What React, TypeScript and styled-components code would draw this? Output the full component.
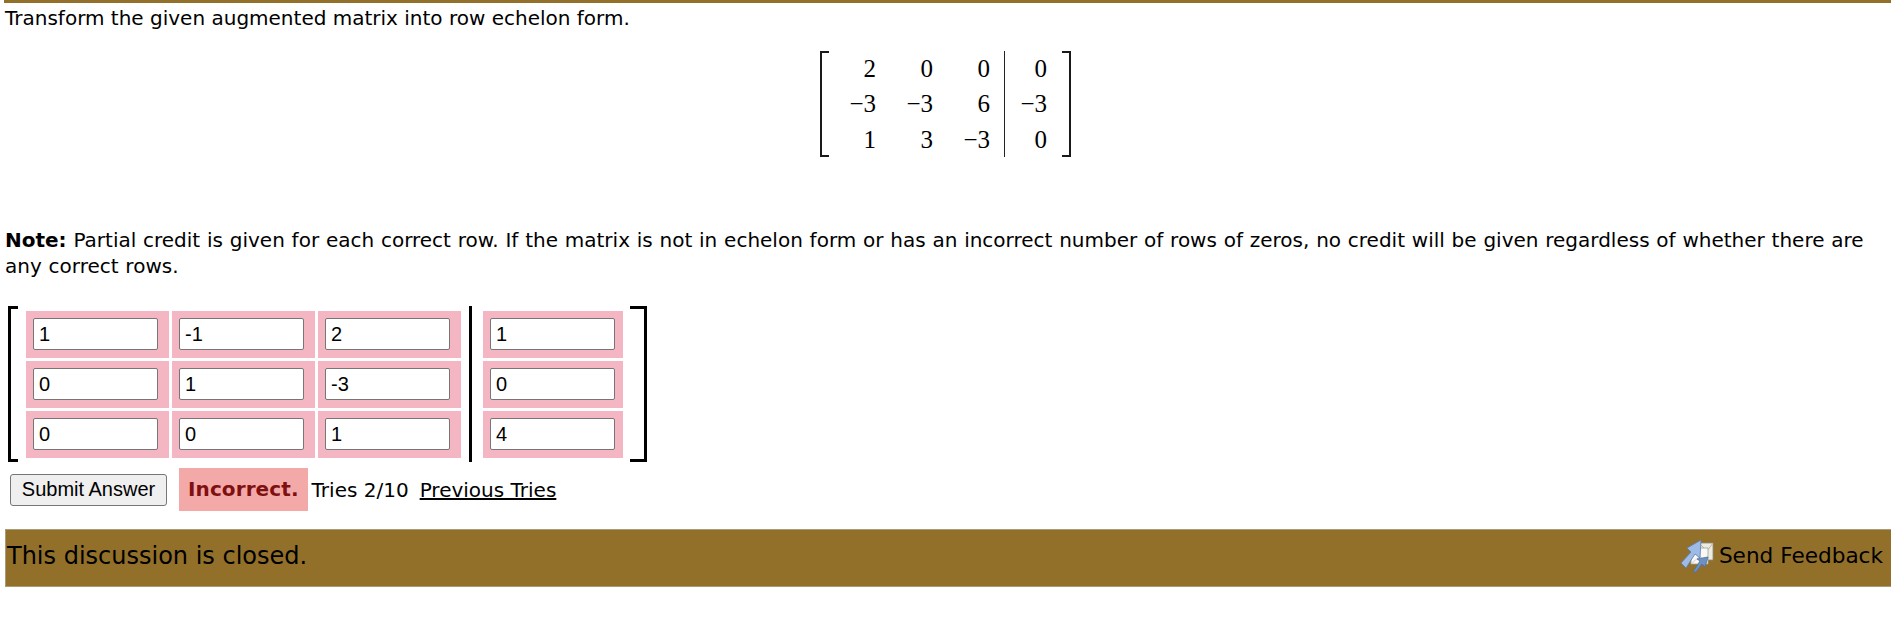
import React from 'react';
import styled, { createGlobalStyle } from 'styled-components';

const GlobalStyle = createGlobalStyle`
	html, body {
		margin: 0;
		padding: 0;
		background: #ffffff;
	}
	body {
		font-family: 'DejaVu Sans', Verdana, sans-serif;
		font-size: 20px;
		line-height: 26px;
		color: #000000;
	}
`;

const problemRows = [
	['2', '0', '0', '0'],
	['\u22123', '\u22123', '6', '\u22123'],
	['1', '3', '\u22123', '0'],
];

const answerRows = [
	['1', '-1', '2', '1'],
	['0', '1', '-3', '0'],
	['0', '0', '1', '4'],
];

const FeedbackIcon = () => (
	<svg width="34" height="34" viewBox="0 0 34 34">
		<path d="M19 4 L33 4 L33 21 L19 21 Z" fill="#ecebe4" stroke="#8f8a78" strokeWidth="0.8" />
		<path d="M19 4 L27 12 L33 4" fill="none" stroke="#b9b6a8" strokeWidth="1" />
		<path d="M11 9 L28 9 L28 25 L11 25 Z" fill="#f8f8f4" stroke="#a5a296" strokeWidth="0.8" />
		<path d="M11 25 L20 17 L28 25" fill="none" stroke="#c9c7bb" strokeWidth="0.8" />
		<path d="M13 33 L20 22 L17 20 L28 18 L25 28 L22 25 L16 33 Z" fill="#6f90c2" stroke="#4d6f9f" strokeWidth="0.8" />
		<path d="M1 24 L11 13 L7 9 L21 1 L20 19 L15 15 L6 29 Z" fill="#9dbbe6" stroke="#5a7cae" strokeWidth="0.8" />
	</svg>
);

const App: React.FC = () => {
	return (
		<Page>
			<GlobalStyle />
			<TopRule />
			<Prompt>Transform the given augmented matrix into row echelon form.</Prompt>
			<ProblemBlock>
				<ProblemBracket $side="left" />
				<ProblemGrid>
					{problemRows.map((row, i) =>
						row.map((value, j) => (
							<ProblemCell key={`${i}-${j}`} $split={j === 2}>
								{value}
							</ProblemCell>
						))
					)}
				</ProblemGrid>
				<ProblemBracket $side="right" />
			</ProblemBlock>
			<Note>
				<b>Note:</b> Partial credit is given for each correct row. If the matrix is not in echelon form or has an
				incorrect number of rows of zeros, no credit will be given regardless of whether there are any correct rows.
			</Note>
			<AnswerBlock>
				<AnswerBracket $side="left" />
				<AnswerGrid>
					{answerRows.map((row) =>
						row.slice(0, 3).map((value, j) => (
							<Cell key={j}>
								<CellInput defaultValue={value} />
							</Cell>
						))
					)}
				</AnswerGrid>
				<AugmentBar />
				<AugmentColumn>
					{answerRows.map((row, i) => (
						<Cell key={i}>
							<CellInput defaultValue={row[3]} />
						</Cell>
					))}
				</AugmentColumn>
				<AnswerBracket $side="right" />
			</AnswerBlock>
			<SubmitRow>
				<SubmitButton type="button">Submit Answer</SubmitButton>
				<Verdict>Incorrect.</Verdict>
				<Tries>Tries 2/10</Tries>
				<PreviousLink href="#">Previous Tries</PreviousLink>
			</SubmitRow>
			<DiscussionBar>
				<DiscussionText>This discussion is closed.</DiscussionText>
				<FeedbackLink>
					<FeedbackIcon />
					Send Feedback
				</FeedbackLink>
			</DiscussionBar>
		</Page>
	);
};
export default App;

const Page = styled.div`
	padding-left: 4px;
	width: 1887px;
`;

const TopRule = styled.div`
	height: 3px;
	background: #92702a;
`;

const Prompt = styled.div`
	padding-left: 1px;
	margin-top: 2px;
`;

const ProblemBlock = styled.div`
	display: flex;
	justify-content: center;
	margin: 20px 0 0 -4px;
	height: 106px;
`;

const ProblemBracket = styled.div<{ $side: 'left' | 'right' }>`
	width: 7px;
	border: 2px solid #1a1a1a;
	${(props) => (props.$side === 'left' ? 'border-right: none;' : 'border-left: none;')}
`;

const ProblemGrid = styled.div`
	display: grid;
	grid-template-columns: 47px 57px 72px 42px;
	grid-template-rows: repeat(3, 1fr);
	padding-right: 15px;
	font-family: 'Liberation Serif', 'Times New Roman', serif;
	font-size: 25px;
`;

const ProblemCell = styled.div<{ $split: boolean }>`
	text-align: right;
	line-height: 35px;
	padding-right: ${(props) => (props.$split ? '14px' : '0')};
	border-right: ${(props) => (props.$split ? '1px solid #222222' : 'none')};
`;

const Note = styled.div`
	padding: 0 4px 0 1px;
	margin-top: 70px;
	word-spacing: 0.43px;
`;

const AnswerBlock = styled.div`
	display: flex;
	align-items: stretch;
	height: 156px;
	margin: 27px 0 0 4px;
`;

const AnswerBracket = styled.div<{ $side: 'left' | 'right' }>`
	width: ${(props) => (props.$side === 'left' ? '7px' : '14px')};
	border: 3px solid #000000;
	${(props) => (props.$side === 'left' ? 'border-right: none;' : 'border-left: none; margin-left: 7px;')}
`;

const AnswerGrid = styled.div`
	display: grid;
	grid-template-columns: repeat(3, 143px);
	grid-auto-rows: 47px;
	gap: 3px;
	margin: 5px 0 0 8px;
`;

const AugmentColumn = styled.div`
	display: grid;
	grid-template-columns: 140px;
	grid-auto-rows: 47px;
	gap: 3px;
	margin-top: 5px;
`;

const AugmentBar = styled.div`
	width: 3px;
	background: #000000;
	margin: 0 11px 0 8px;
`;

const Cell = styled.div`
	padding: 7px 0 0 7px;
	background: #f4b6c2;
`;

const CellInput = styled.input`
	display: block;
	box-sizing: border-box;
	width: 125px;
	height: 32px;
	padding: 0 5px;
	border: 1px solid #767676;
	border-radius: 2px;
	background: #ffffff;
	color: #000000;
	font-family: 'Liberation Sans', Arial, sans-serif;
	font-size: 20px;
`;

const SubmitRow = styled.div`
	display: flex;
	align-items: center;
	height: 43px;
	margin: 6px 0 0 6px;
`;

const SubmitButton = styled.button`
	box-sizing: border-box;
	width: 157px;
	height: 32px;
	padding: 0;
	border: 1px solid #767676;
	border-radius: 3px;
	background: #efefef;
	color: #000000;
	font-family: 'Liberation Sans', Arial, sans-serif;
	font-size: 20px;
`;

const Verdict = styled.span`
	display: block;
	margin-left: 12px;
	padding: 0 9px;
	height: 43px;
	line-height: 43px;
	background: #f4a9a9;
	color: #7f1010;
	font-weight: bold;
	letter-spacing: 0.1px;
`;

const Tries = styled.span`
	margin-left: 4px;
`;

const PreviousLink = styled.a`
	margin-left: 11px;
	color: #000000;
`;

const DiscussionBar = styled.div`
	display: flex;
	align-items: center;
	justify-content: space-between;
	box-sizing: border-box;
	height: 58px;
	margin: 18px 0 0 1px;
	padding: 0 8px 4px 1px;
	background: #92702a;
	border: 1px solid #a99a78;
	border-right: none;
`;

const DiscussionText = styled.span`
	font-size: 24px;
`;

const FeedbackLink = styled.span`
	display: flex;
	align-items: center;
	gap: 5px;
	font-size: 21.6px;
`;
